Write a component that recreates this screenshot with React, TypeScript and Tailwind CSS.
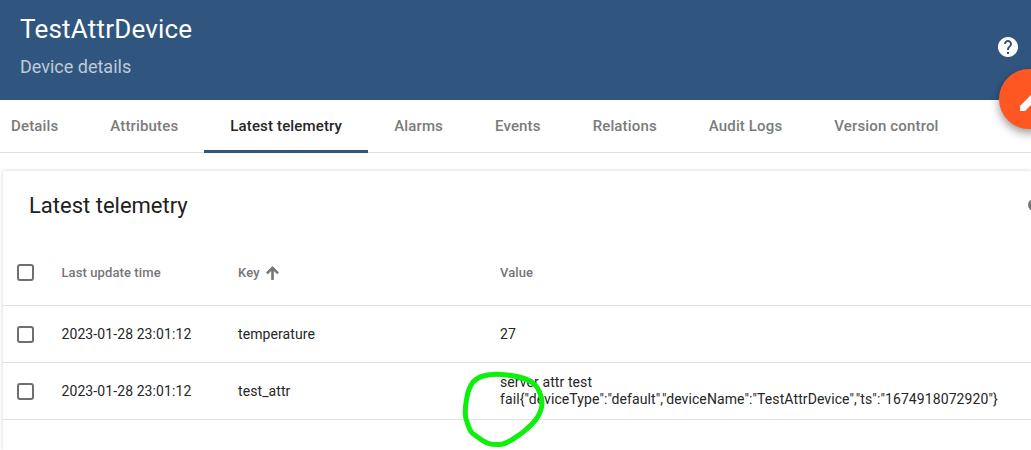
import React from 'react';

const tabs = ['Details', 'Attributes', 'Latest telemetry', 'Alarms', 'Events', 'Relations', 'Audit Logs', 'Version control'];

const rows = [
  { time: '2023-01-28 23:01:12', key: 'temperature', value: ['27'] },
  {
    time: '2023-01-28 23:01:12',
    key: 'test_attr',
    value: ['server attr test', 'fail{"deviceType":"default","deviceName":"TestAttrDevice","ts":"1674918072920"}'],
  },
];

const Check = () => <div className="w-[17px] h-[17px] border-2 border-[#6f6f6f] rounded-[3px] box-border" />;

export default function App() {
  return (
    <div className="relative w-[1031px] h-[450px] overflow-hidden bg-white font-['Roboto',sans-serif]">
      <header className="h-[100px] bg-[#305680] pl-[20px] pt-[13px] text-white">
        <h1 className="text-[26px] leading-[32px] font-normal tracking-[0.2px]">TestAttrDevice</h1>
        <p className="mt-[10px] text-[18px] leading-[24px] text-white/70">Device details</p>
      </header>

      <nav className="flex h-[53px] -ml-[15px] border-b border-[#e0e0e0] w-[1046px]">
        {tabs.map((t) => (
          <div
            key={t}
            className={`px-[26px] h-[53px] flex items-center text-[15px] tracking-[0.15px] font-medium whitespace-nowrap ${
              t === 'Latest telemetry' ? 'text-[#262626] border-b-[3px] border-[#305680] pt-[3px]' : 'text-[#7b7b7b]'
            }`}
          >
            {t}
          </div>
        ))}
      </nav>

      <section className="mt-[18px] ml-[3px] h-[279px] bg-white shadow-[0_0_4px_rgba(0,0,0,0.18)]">
        <div className="h-[69px] pl-[26px] pt-[19px] text-[22px] leading-[32px] text-[#212121]">Latest telemetry</div>
        <div className="flex items-center h-[66px] border-b border-[#e0e0e0] text-[13px] tracking-[0.1px] font-medium text-[#757575]">
          <div className="w-[58.5px] pl-[13.5px]"><Check /></div>
          <div className="w-[176.5px]">Last update time</div>
          <div className="w-[262px] flex items-center gap-[4px]">
            Key
            <svg width="17" height="17" viewBox="0 0 24 24" className="fill-[#757575] -mt-[1px]">
              <path d="M4 12l1.41 1.41L11 7.83V22h2V7.83l5.58 5.59L20 12l-8-8-8 8z" stroke="#757575" strokeWidth="1.5" />
            </svg>
          </div>
          <div>Value</div>
        </div>
        {rows.map((r) => (
          <div key={r.key} className="flex items-center h-[57px] border-b border-[#e0e0e0] text-[14px] tracking-[0.09px] leading-[17px] text-[#262626]">
            <div className="w-[58.5px] pl-[13.5px]"><Check /></div>
            <div className="w-[176.5px]">{r.time}</div>
            <div className="w-[262px]">{r.key}</div>
            <div className="whitespace-nowrap">
              {r.value.map((v) => (
                <div key={v}>{v}</div>
              ))}
            </div>
          </div>
        ))}
      </section>

      <div className="absolute left-[1028px] top-[199px] w-[6px] h-[12px] rounded-l-full bg-[#757575]" />

      <div className="absolute left-[996px] top-[35px] w-[24px] h-[24px] flex items-center justify-center">
        <svg width="26" height="26" viewBox="0 0 24 24" fill="#fff">
          <path d="M12 2C6.48 2 2 6.48 2 12s4.48 10 10 10 10-4.48 10-10S17.52 2 12 2zm1 17h-2v-2h2v2zm2.07-7.75l-.9.92C13.45 12.9 13 13.5 13 15h-2v-.5c0-1.1.45-2.1 1.17-2.83l1.24-1.26c.37-.36.59-.86.59-1.41 0-1.1-.9-2-2-2s-2 .9-2 2H8c0-2.21 1.79-4 4-4s4 1.79 4 4c0 .88-.36 1.68-.93 2.25z" />
        </svg>
      </div>

      <div className="absolute left-[999px] top-[69px] w-[60px] h-[60px] rounded-full bg-[#ff5722] shadow-[0_4px_10px_rgba(0,0,0,0.4)]">
        <svg width="60" height="60" viewBox="0 0 60 60" className="absolute left-0 top-0">
          <path d="M21 42V37L36 22L41 27L26 42Z" fill="#fff" />
        </svg>
      </div>

      <svg width="1031" height="450" className="absolute left-0 top-0 pointer-events-none" fill="none">
        <path
          d="M483 376C490 374 500 374 507 375C516 376 524 378 530 381C534 384 537 386 538 389C541 394 542 398 542 404C542 409 540 413 537 418C533 424 528 428 522 433C516 437 510 442 503 444C497 445 492 445 487 443C481 440 478 437 472 433C468 428 468 424 466 419C464 410 466 403 467 397C468 391 470 386 473 382C476 379 479 377 483 376Z"
          stroke="#0cf00c"
          strokeWidth="5"
          strokeLinecap="round"
        />
      </svg>
    </div>
  );
}
